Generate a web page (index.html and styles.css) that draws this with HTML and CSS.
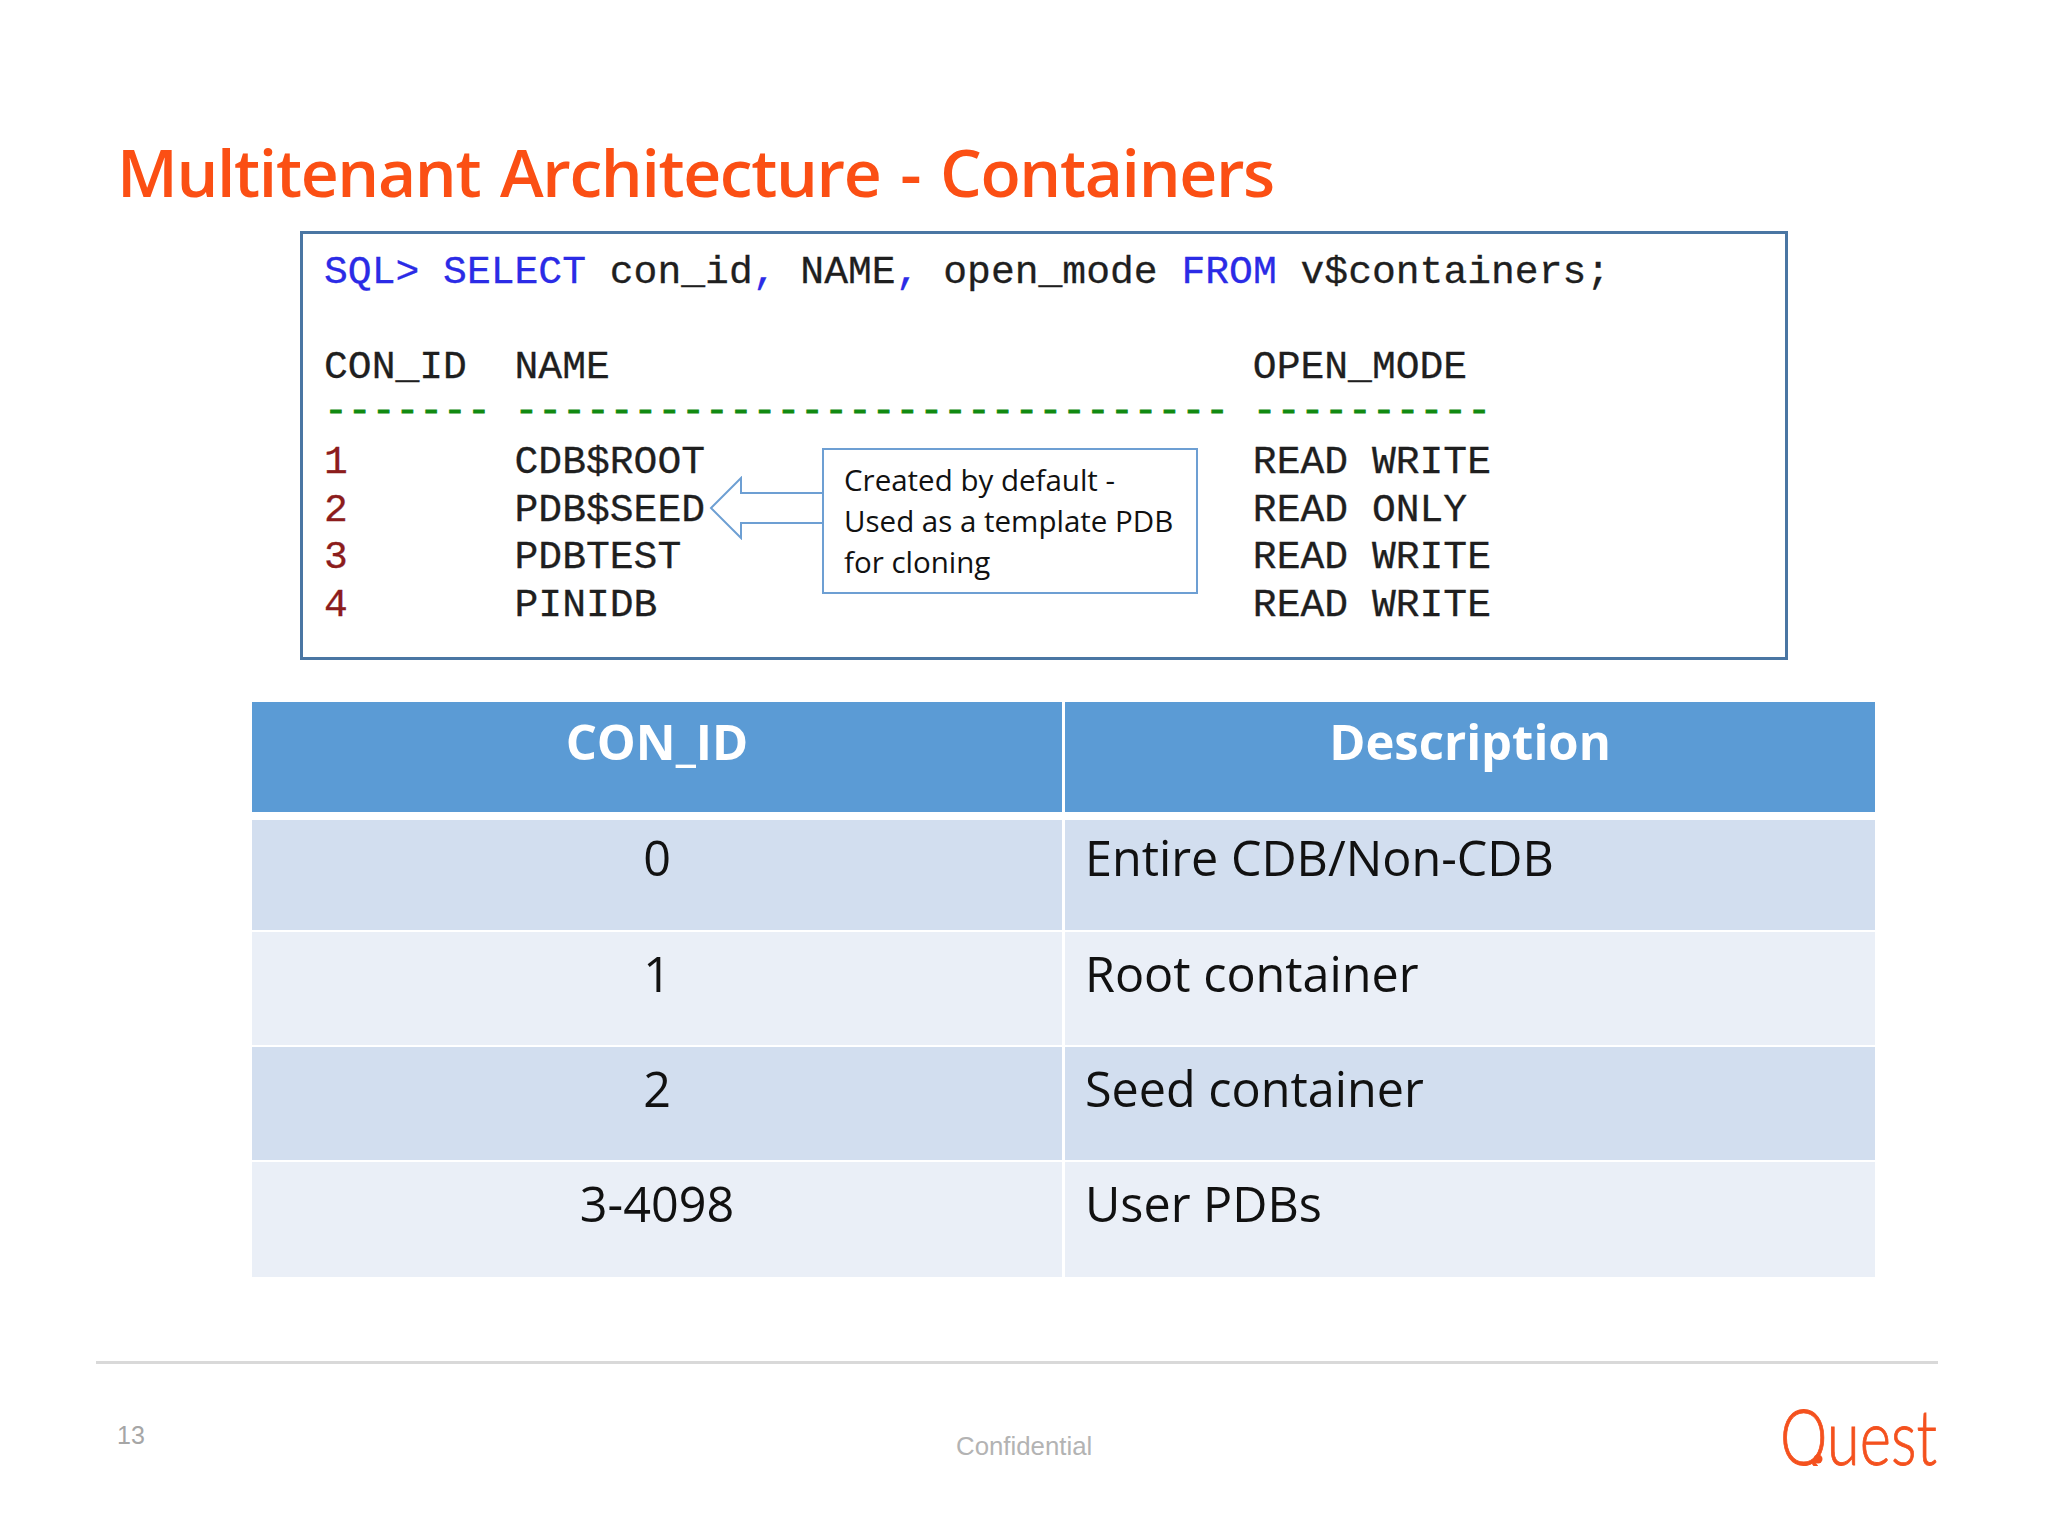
FILE: index.html
```html
<!DOCTYPE html>
<html lang="en">
<head>
<meta charset="utf-8">
<title>Multitenant Architecture - Containers</title>
<link rel="stylesheet" href="styles.css">
</head>
<body>
<main class="slide">
  <h1 class="title">Multitenant Architecture - Containers</h1>
  <section class="sql-box">
    <div class="sql">
      <div class="line"><span class="kw">SQL&gt; SELECT</span> con_id<span class="kw">,</span> NAME<span class="kw">,</span> open_mode <span class="kw">FROM</span> v$containers;</div>
      <div class="line"></div>
      <div class="line cols"><span>CON_ID</span><span>NAME</span><span>OPEN_MODE</span></div>
      <div class="line"><span class="dash">------- ------------------------------ ----------</span></div>
      <div class="line cols"><span class="num">1</span><span>CDB$ROOT</span><span>READ WRITE</span></div>
      <div class="line cols"><span class="num">2</span><span>PDB$SEED</span><span>READ ONLY</span></div>
      <div class="line cols"><span class="num">3</span><span>PDBTEST</span><span>READ WRITE</span></div>
      <div class="line cols"><span class="num">4</span><span>PINIDB</span><span>READ WRITE</span></div>
    </div>
    <svg class="arrow" width="114" height="64" viewBox="0 0 114 64" aria-hidden="true">
      <path d="M114 17H32V2L2 32L32 62V47H114" fill="#fff" stroke="#6d9fd3" stroke-width="2"/>
    </svg>
    <div class="callout">Created by default -<br>Used as a template PDB<br>for cloning</div>
  </section>
  <table class="grid">
    <thead>
      <tr><th>CON_ID</th><th>Description</th></tr>
    </thead>
    <tbody>
      <tr class="dark first"><td class="id">0</td><td>Entire CDB/Non-CDB</td></tr>
      <tr class="light"><td class="id">1</td><td>Root container</td></tr>
      <tr class="dark"><td class="id">2</td><td>Seed container</td></tr>
      <tr class="light"><td class="id">3-4098</td><td>User PDBs</td></tr>
    </tbody>
  </table>
  <footer class="footer">
    <span class="page-no">13</span>
    <span class="confidential">Confidential</span>
    <svg class="logo" width="200" height="72" viewBox="0 0 200 72" role="img" aria-label="Quest">
      <text class="logo-text" x="42" y="62" textLength="157" lengthAdjust="spacingAndGlyphs">Quest</text>
      <rect x="40" y="63" width="56" height="24" fill="#fff"/>
      <circle cx="80" cy="56" r="4.5" fill="#f4511e"/>
    </svg>
  </footer>
</main>
</body>
</html>
```
FILE: styles.css
```css
* { box-sizing: border-box; }
html, body { margin: 0; background: #fff; }
.slide {
  width: 2048px;
  height: 1536px;
  padding-top: 130px;
  overflow: hidden;
}
.title {
  margin: 0 0 0 117px;
  height: 101px;
  font: 600 66px/83px "Open Sans", sans-serif;
  letter-spacing: -1.35px;
  word-spacing: 4px;
  color: #fb4f14;
  white-space: nowrap;
}
.sql-box {
  position: relative;
  width: 1488px;
  height: 429px;
  margin-left: 300px;
  border: 3px solid #4a76a3;
  padding: 15px 0 0 21px;
}
.sql {
  font: 400 39.7px/47.5px "Liberation Mono", monospace;
  color: #1f1f1f;
  -webkit-text-stroke: 0.3px currentColor;
}
.line {
  height: 47.5px;
  white-space: pre;
}
.cols {
  display: grid;
  grid-template-columns: 8ch 31ch auto;
}
.kw { color: #2b2be6; }
.num { color: #8c1c1c; }
.dash {
  color: #118a11;
  line-height: 1;
  vertical-align: 4px;
  -webkit-text-stroke: 0.8px currentColor;
}
.arrow {
  position: absolute;
  left: 406px;
  top: 242px;
}
.callout {
  position: absolute;
  left: 519px;
  top: 214px;
  width: 376px;
  height: 146px;
  padding: 9px 0 0 20px;
  background: #fff;
  border: 2px solid #6d9fd3;
  font: 400 29.5px/41px "Open Sans", sans-serif;
  color: #111;
  white-space: nowrap;
}
.grid {
  width: 1623px;
  margin: 42px 0 0 252px;
  border-collapse: separate;
  border-spacing: 0;
  table-layout: fixed;
  font-family: "Open Sans", sans-serif;
}
.grid th, .grid td {
  padding: 0 20px;
  vertical-align: top;
  font-size: 48.5px;
}
.grid th {
  height: 118px;
  background: #5b9bd5;
  background-clip: padding-box;
  color: #fff;
  font-size: 49px;
  font-weight: 700;
  line-height: 78px;
  text-align: center;
  border-bottom: 8px solid #fff;
}
.grid th:first-child { width: 810px; }
.grid th + th, .grid td + td { border-left: 3px solid #fff; }
.grid td {
  height: 115px;
  line-height: 82px;
  color: #111;
  background-clip: padding-box;
  border-bottom: 2px solid #fff;
}
.grid .first td { height: 112px; line-height: 74px; }
.grid tr:last-child td { height: 115px; border-bottom: 0; }
.grid .id { text-align: center; }
.dark td { background-color: #d2deef; }
.light td { background-color: #eaeff7; }
.footer {
  display: grid;
  grid-template-columns: 860px auto 1fr;
  align-items: start;
  width: 1842px;
  height: 120px;
  margin: 84px 0 0 96px;
  border-top: 3px solid #d9d9d9;
}
.page-no {
  margin: 55px 0 0 21px;
  font: 400 25px/32px "Liberation Sans", sans-serif;
  color: #a6a6a6;
}
.confidential {
  margin-top: 66px;
  font: 400 25.8px/32px "Liberation Sans", sans-serif;
  color: #b3b3b3;
}
.logo {
  justify-self: end;
  margin-top: 39px;
  overflow: visible;
}
.logo-text {
  font: 300 76px "Lato", sans-serif;
  fill: #f4511e;
  stroke: #f4511e;
  stroke-width: 0.9px;
}
```
